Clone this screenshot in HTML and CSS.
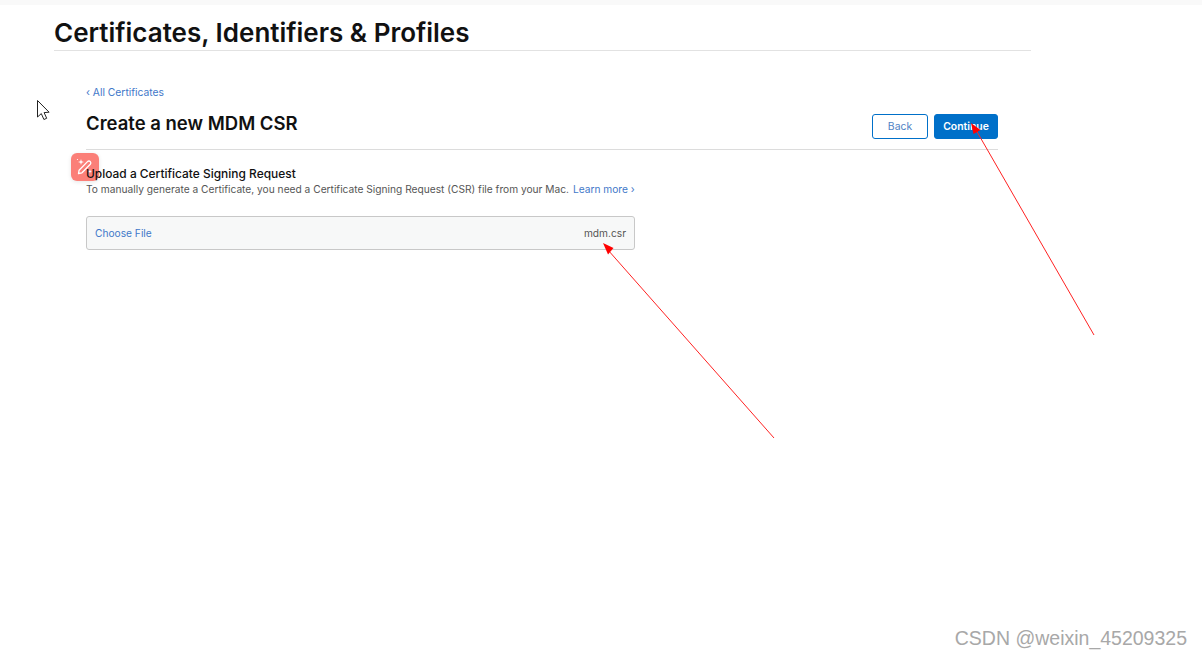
FILE: index.html
```html
<!DOCTYPE html>
<html lang="en">
<head>
  <meta charset="UTF-8" />
  <title>Certificates, Identifiers &amp; Profiles</title>
  <link rel="stylesheet" href="styles.css">
</head>
<body>

<div class="top-strip"></div>

<div class="pen-badge">
  <svg width="20" height="20" viewBox="0 0 20 20" fill="none" stroke="#fff" stroke-linecap="round" stroke-linejoin="round">
    <path d="M3.500 16.500l.6-3.300 8.400-8.600c.8-.8 2.100-.8 2.800 0 .7.8.7 1.900 0 2.700L7 15.800z" stroke-width="1.300"/>
    <path d="M6 2l.7 2.300 2.300.7-2.300.7L6 8l-.7-2.300L3 5l2.300-.7z" fill="#fff" stroke="none"/>
    <path d="M15 12.500l.5 1.500 1.500.5-1.500.5-.5 1.500-.5-1.500-1.500-.5 1.500-.5z" fill="#fff" stroke="none"/>
    <path d="M2.500 2.500h.01" stroke-width="1.200"/>
  </svg>
</div>

<div class="page">
  <header class="page-title">
    <h1>Certificates, Identifiers &amp; Profiles</h1>
  </header>

  <main class="content">
    <a class="back-link" href="#">&lsaquo; All Certificates</a>
    <div class="head-row">
      <h2>Create a new MDM CSR</h2>
      <div class="actions">
        <button class="btn btn-back">Back</button>
        <button class="btn btn-continue">Continue</button>
      </div>
    </div>

    <section class="upload">
      <h3>Upload a Certificate Signing Request</h3>
      <p>To manually generate a Certificate, you need a Certificate Signing Request (CSR) file from your Mac. <a href="#">Learn more &rsaquo;</a></p>
      <div class="file-box">
        <a href="#">Choose File</a>
        <span>mdm.csr</span>
      </div>
    </section>
  </main>
</div>

<!-- screenshot annotations -->
<svg class="overlay" width="1202" height="656" viewBox="0 0 1202 656" aria-hidden="true">
  <path d="M37.500 100.500v16.500l3.800-3.400 2.600 5.900 2.800-1.200-2.600-5.700 5-.4z" fill="#fff" stroke="#222" stroke-width="1"/>
  <line x1="774" y1="438" x2="608" y2="250" stroke="#f22" stroke-width="1"/>
  <path d="M603 243l10.500 5-5.500 6.500z" fill="#f00"/>
  <line x1="1094" y1="335" x2="976" y2="130" stroke="#f22" stroke-width="1"/>
  <path d="M971 123l9.500 7-7 4z" fill="#f00"/>
</svg>

<div class="watermark">CSDN @weixin_45209325</div>

</body>
</html>
```

FILE: styles.css
```css
* {
  box-sizing: border-box;
}
body {
  margin: 0;
  height: 656px;
  overflow: hidden;
  background: #fff;
  font-family: Inter, 'Liberation Sans', sans-serif;
  color: #111;
  position: relative;
}
a {
  color: #3f78c9;
  text-decoration: none;
}
.top-strip {
  height: 5px;
  background: #f9f9f9;
}
.page {
  position: relative;
  width: 977px;
  margin-left: 54px;
}
.page-title {
  height: 46px;
  border-bottom: 1px solid #e2e2e2;
}
.page-title h1 {
  margin: 0;
  padding-top: 12px;
  font-size: 26px;
  line-height: 32px;
  font-weight: 600;
}
.content {
  width: 912px;
  margin-left: 32px;
  padding-top: 34px;
}
.back-link {
  display: block;
  font-size: 10.300px;
  line-height: 14px;
}
.head-row {
  display: flex;
  justify-content: space-between;
  height: 51px;
  padding-top: 13px;
  border-bottom: 1px solid #dcdcdc;
}
.head-row h2 {
  margin: 0;
  font-size: 18.500px;
  line-height: 22px;
  font-weight: 600;
}
.actions {
  display: flex;
  gap: 6px;
  padding-top: 2px;
}
.btn {
  height: 25px;
  border-radius: 3px;
  font-family: inherit;
  font-size: 10.400px;
  padding: 0;
}
.btn-back {
  width: 56px;
  background: #fff;
  border: 1px solid #0070c9;
  color: #4f82c4;
}
.btn-continue {
  width: 64px;
  background: #0070c9;
  border: 1px solid #0070c9;
  color: #fff;
  font-weight: 600;
}
.upload {
  padding-top: 16px;
}
.upload h3 {
  margin: 0;
  font-size: 11.950px;
  line-height: 16px;
  font-weight: 500;
}
.upload p {
  margin: 0;
  font-size: 10.200px;
  line-height: 14px;
  color: #555;
}
.upload p a {
  margin-left: 1px;
}
.file-box {
  display: flex;
  justify-content: space-between;
  align-items: center;
  width: 549px;
  height: 34px;
  margin-top: 20px;
  padding: 0 8px;
  background: #f7f8f8;
  border: 1px solid #c8c8c8;
  border-radius: 3px;
  font-size: 10.200px;
}
.file-box span {
  color: #555;
}
.overlay {
  position: absolute;
  left: 0;
  top: 0;
}
.pen-badge {
  position: absolute;
  left: 71px;
  top: 153px;
  width: 28px;
  height: 28px;
  display: flex;
  align-items: center;
  justify-content: center;
  background: #fb7f78;
  border-radius: 6px;
  box-shadow: 0 1px 4px rgba(0,0,0,0.1);
}
.watermark {
  position: absolute;
  right: 15px;
  top: 627px;
  font-family: 'Liberation Sans', Arial, sans-serif;
  font-size: 19.500px;
  line-height: 22px;
  color: #a8a8a8;
}
```
